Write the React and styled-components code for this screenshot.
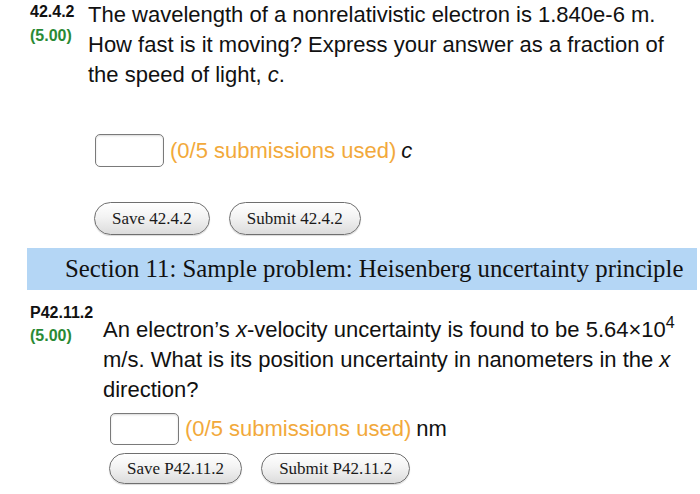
import styled, { createGlobalStyle } from 'styled-components';

const Global = createGlobalStyle`
  body {
    margin: 0;
    background: #fff;
    font-family: "Liberation Sans", Arial, sans-serif;
  }
`

const Page = styled.div`
  width: 700px;
  height: 494px;
  overflow: hidden;
  display: flex;
  flex-direction: column;
`

const Problem = styled.div`
  display: flex;
  padding-left: 30px;
  margin-top: ${p => p.top}px;
`

const Labels = styled.div`
  width: ${p => p.w}px;
  flex-shrink: 0;
  font-weight: bold;
  font-size: 16px;
  line-height: ${p => p.lh}px;
  color: #111;
  margin-top: ${p => p.shift}px;
`

const Points = styled.div`
  color: #2a8a35;
`

const Body = styled.div`
  padding-top: ${p => p.pad}px;
`

const Text = styled.div`
  font-size: 22px;
  line-height: 30px;
  color: #111;
  white-space: nowrap;
`

const Sup = styled.sup`
  font-size: 16px;
  line-height: 0;
  vertical-align: 9px;
`

const AnswerRow = styled.div`
  display: flex;
  align-items: center;
  gap: 6px;
  margin-left: 7px;
  margin-top: ${p => p.top}px;
  font-size: 22px;
`

const Box = styled.div`
  width: 67px;
  height: ${p => p.h}px;
  border: 1px solid #7a7a7a;
  border-radius: 5px;
  background: #fff;
  box-shadow: inset 0 1px 2px rgba(0,0,0,0.15);
`

const Used = styled.span`
  color: #f2a93b;
`

const Unit = styled.span`
  color: #111;
  margin-left: 5px;
  font-style: ${p => (p.italic ? 'italic' : 'normal')};
`

const Buttons = styled.div`
  display: flex;
  gap: 19px;
  margin-left: 6px;
  margin-top: ${p => p.top}px;
`

const Button = styled.div`
  height: ${p => p.h}px;
  padding: 0 17px;
  display: flex;
  align-items: center;
  border: 1px solid #6f6f6f;
  border-radius: 17px;
  background: linear-gradient(#ffffff, #f3f3f3 45%, #dcdcdc);
  font-family: "Liberation Serif", "Times New Roman", serif;
  font-size: 17px;
  color: #1a1a1a;
  box-shadow: 0 1px 1px rgba(0,0,0,0.15);
`

const SectionBar = styled.div`
  margin: 13px 3px 0 27px;
  height: 42px;
  display: flex;
  align-items: center;
  padding-left: 38px;
  background: #b4d6f5;
  font-family: "Liberation Serif", "Times New Roman", serif;
  font-size: 24.8px;
  color: #111;
  white-space: nowrap;
`

const App = () => {
  return (
    <Page>
      <Global />
      <Problem top={0}>
        <Labels w={58} shift={0} lh={24}>
          <div>42.4.2</div>
          <Points>(5.00)</Points>
        </Labels>
        <Body pad={0}>
          <Text>
            The wavelength of a nonrelativistic electron is 1.840e-6 m.<br />
            How fast is it moving? Express your answer as a fraction of<br />
            the speed of light, <i>c</i>.
          </Text>
          <AnswerRow top={44}>
            <Box h={31} />
            <span>
              <Used>(0/5 submissions used)</Used>
              <Unit italic>c</Unit>
            </span>
          </AnswerRow>
          <Buttons top={35}>
            <Button h={31}>Save 42.4.2</Button>
            <Button h={31}>Submit 42.4.2</Button>
          </Buttons>
        </Body>
      </Problem>

      <SectionBar>Section 11: Sample problem: Heisenberg uncertainty principle</SectionBar>

      <Problem top={14}>
        <Labels w={73} shift={-3} lh={23}>
          <div>P42.11.2</div>
          <Points>(5.00)</Points>
        </Labels>
        <Body pad={11}>
          <Text>
            An electron’s <i>x</i>-velocity uncertainty is found to be 5.64×10<Sup>4</Sup><br />
            m/s. What is its position uncertainty in nanometers in the <i>x</i><br />
            direction?
          </Text>
          <AnswerRow top={8}>
            <Box h={30} />
            <span>
              <Used>(0/5 submissions used)</Used>
              <Unit>nm</Unit>
            </span>
          </AnswerRow>
          <Buttons top={8}>
            <Button h={29}>Save P42.11.2</Button>
            <Button h={29}>Submit P42.11.2</Button>
          </Buttons>
        </Body>
      </Problem>
    </Page>
  );
}

export default App;
